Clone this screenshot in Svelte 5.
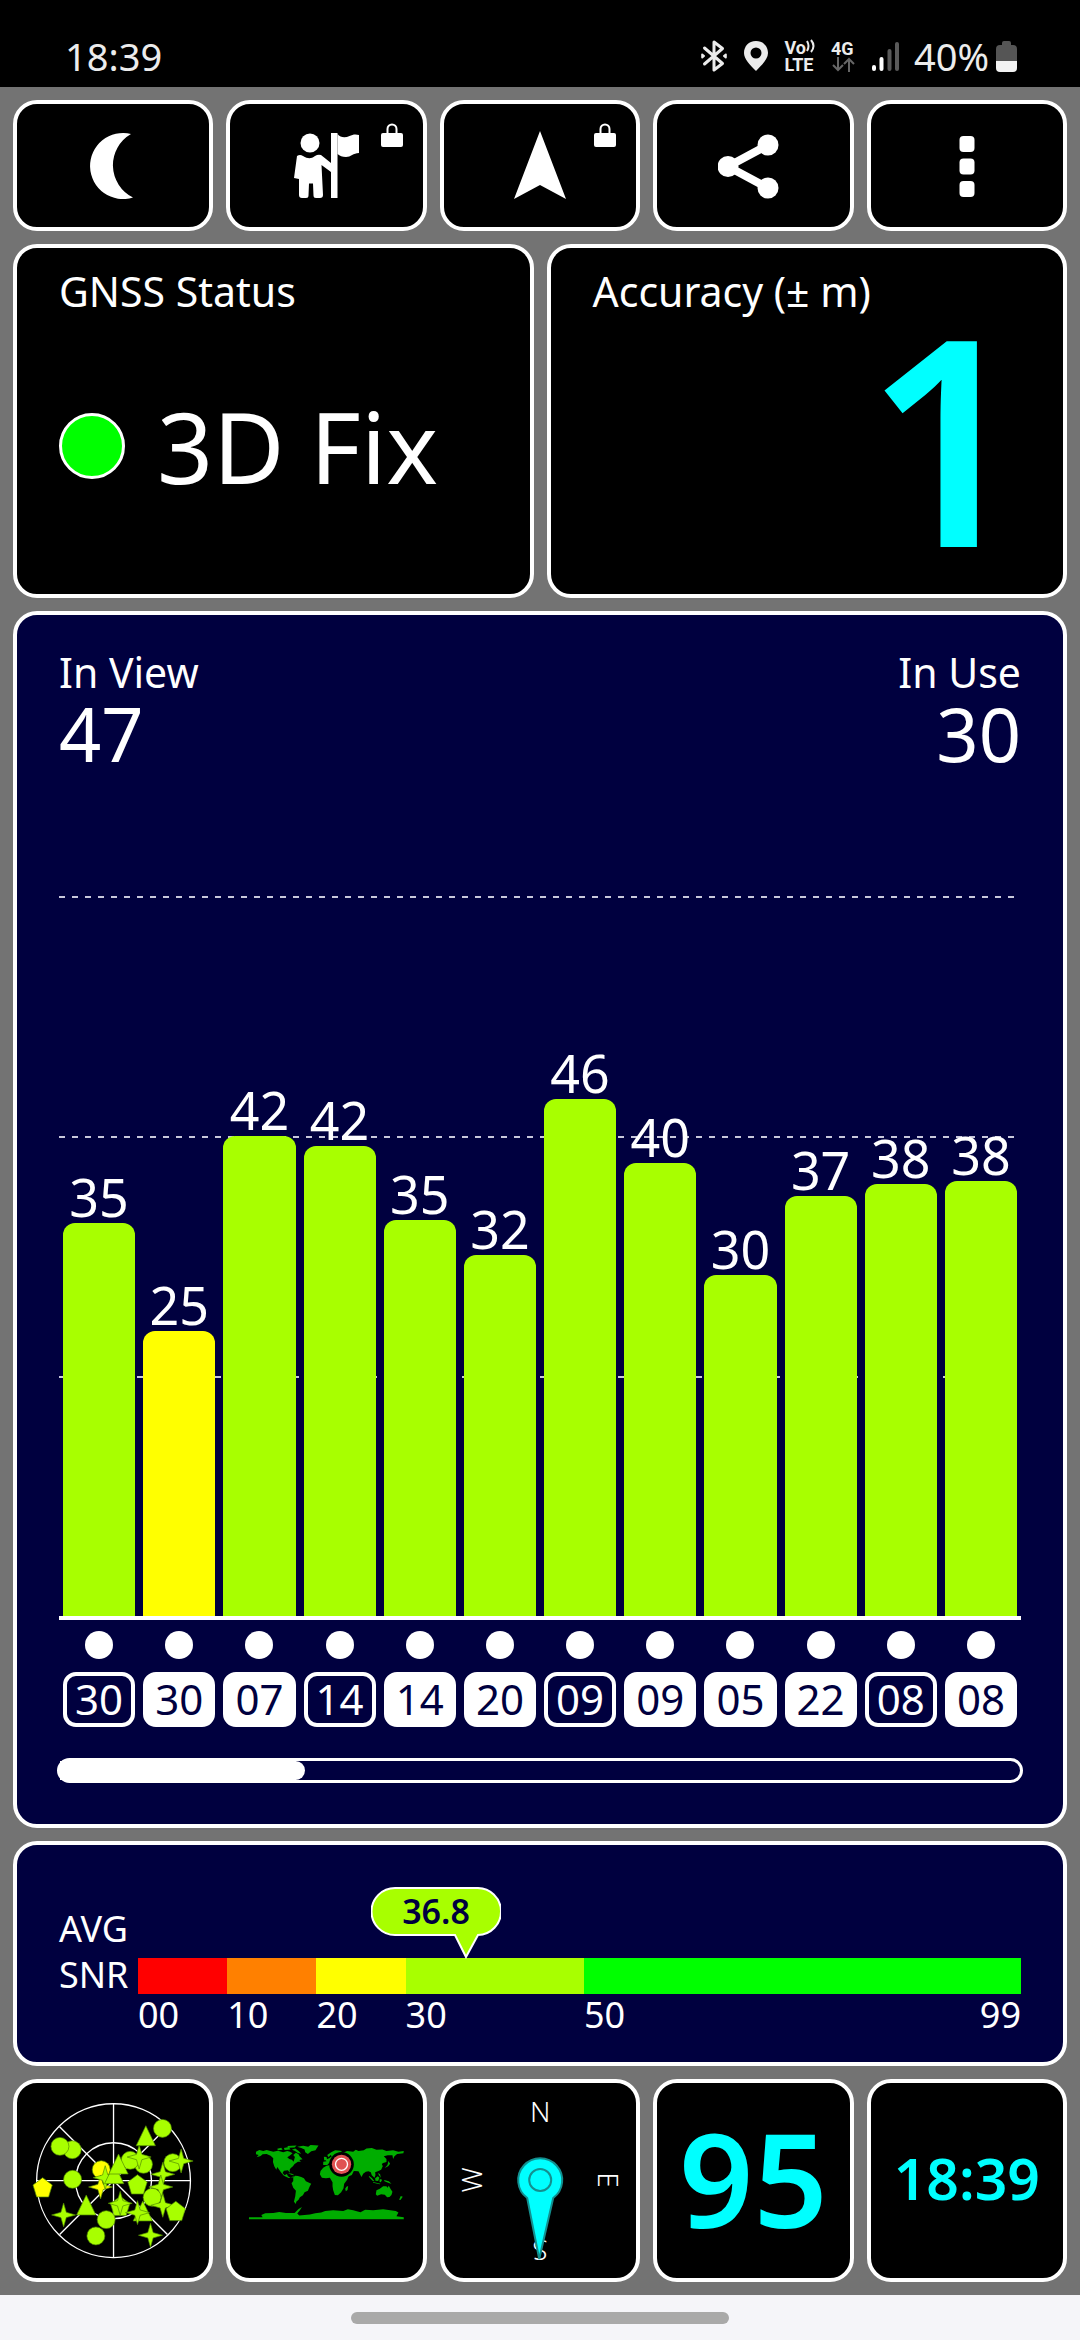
<script lang="ts">
    type Satellite = { id: string; snr: number; level: number; outlined?: boolean; weak?: boolean };

    // level is the bar height in percent of the plot
    const satellites: Satellite[] = [
        { id: "30", snr: 35, level: 54.6, outlined: true },
        { id: "30", snr: 25, level: 39.6, weak: true },
        { id: "07", snr: 42, level: 66.7 },
        { id: "14", snr: 42, level: 65.3, outlined: true },
        { id: "14", snr: 35, level: 55 },
        { id: "20", snr: 32, level: 50.1 },
        { id: "09", snr: 46, level: 71.8, outlined: true },
        { id: "09", snr: 40, level: 62.9 },
        { id: "05", snr: 30, level: 47.4 },
        { id: "22", snr: 37, level: 58.4 },
        { id: "08", snr: 38, level: 60, outlined: true },
        { id: "08", snr: 38, level: 60.4 },
    ];

    const segments = [
        { label: "00", size: 10, color: "#ff0000" },
        { label: "10", size: 10, color: "#ff8000" },
        { label: "20", size: 10, color: "#ffff00" },
        { label: "30", size: 20, color: "#a8ff00" },
        { label: "50", size: 49, color: "#00ff00" },
    ];

    let time = $state("18:39");
    let inView = $state(47);
    let average = $state(36.8);
    let scrolled = $state(25.5);

    const shapes: Record<string, string> = {
        circle: "M-27 0a27 27 0 1 0 54 0a27 27 0 1 0-54 0z",
        triangle: "M0-34L29 26H-29z",
        pentagon: "M0-30L29-8L18 28H-18L-29-8z",
        star: "M0-36L8-8L36 0L8 8L0 36L-8 8L-36 0L-8-8z",
    };

    const sky: [string, number, number, string?][] = [
        ["circle", 216, 268],
        ["circle", 179, 258],
        ["circle", 217, 357],
        ["circle", 303, 328, "#ffff00"],
        ["circle", 487, 204],
        ["triangle", 437, 230],
        ["pentagon", 127, 382, "#ffff00"],
        ["star", 301, 380, "#ffff00"],
        ["circle", 430, 312],
        ["circle", 390, 300],
        ["star", 417, 290],
        ["star", 315, 352],
        ["triangle", 342, 344],
        ["triangle", 355, 315],
        ["circle", 518, 307],
        ["star", 543, 302],
        ["star", 488, 342],
        ["star", 482, 380],
        ["circle", 456, 411],
        ["pentagon", 412, 373],
        ["star", 488, 435],
        ["pentagon", 527, 453],
        ["triangle", 258, 438],
        ["pentagon", 360, 438],
        ["star", 360, 429],
        ["triangle", 428, 456],
        ["star", 412, 457],
        ["star", 190, 464],
        ["circle", 318, 478],
        ["circle", 287, 527],
        ["star", 451, 525],
    ];
</script>

{#snippet lock()}
    <svg class="lock" viewBox="0 0 22 24">
        <path d="M6.500 11V6a4.500 4.500 0 0 1 9 0V11" fill="none" stroke="#fff" stroke-width="2" />
        <rect y="10" width="22" height="14" rx="2" fill="#fff" />
    </svg>
{/snippet}

<div class="app">
    <header class="status-bar">
        <span class="clock">{time}</span>
        <div class="status-icons">
            <svg width="28" height="34" viewBox="0 0 28 34" fill="none" stroke="#ececec" stroke-width="3" stroke-linejoin="round" stroke-linecap="round">
                <path d="M4.500 9L22.500 24.500L14 31V3L22.500 9.500L4.500 25" />
                <path d="M2.200 15.500v3L4 17zM25.800 15.500v3L24 17z" stroke-width="2" />
            </svg>
            <svg width="26" height="30" viewBox="0 0 26 30">
                <path fill="#ececec" fill-rule="evenodd" d="M13 0C5.500 0 1 5.500 1 12c0 6 6 12 12 18 6-6 12-12 12-18C25 5.500 20.500 0 13 0zm0 6.500a5.500 5.500 0 1 1 0 11 5.500 5.500 0 0 1 0-11z" />
            </svg>
            <div class="net">
                <span class="vo">Vo<svg width="10" height="14" viewBox="0 0 10 14" fill="none" stroke="#ececec" stroke-width="2"><path d="M1 2q3 5 0 10M5 1q5 6 0 12" /></svg></span>
                <span>LTE</span>
            </div>
            <div class="net">
                <span>4G</span>
                <svg width="25" height="15" viewBox="0 0 25 15" fill="none" stroke="#666" stroke-width="2"><path d="M7 0v13M2 8l5 5 5-5M18 15V2M13 7l5-5 5 5" /></svg>
            </div>
            <svg width="28" height="30" viewBox="0 0 28 30" stroke-width="4" stroke-linecap="round">
                <path d="M3 26v2M10.500 18v10" stroke="#fff" />
                <path d="M18.500 10v18M26 3v25" stroke="#5a5a5a" />
            </svg>
            <span class="charge">40%</span>
            <svg width="21" height="31" viewBox="0 0 21 31">
                <path d="M6 4V2q0-2 2-2h5q2 0 2 2v2h2q4 0 4 4v12H0V8q0-4 4-4z" fill="#555" />
                <path d="M0 20h21v7q0 4-4 4H4q-4 0-4-4z" fill="#f2f2f2" />
            </svg>
        </div>
    </header>

    <main>
        <nav class="row">
            <button class="tile tool" aria-label="Night mode">
                <svg class="icon" viewBox="0 0 70 70"><path d="M53 3A33 33 0 1 0 55 66.500A36 36 0 0 1 53 3z" /></svg>
            </button>
            <button class="tile tool" aria-label="Waypoints">
                <svg class="icon" viewBox="0 0 70 70">
                    <circle cx="18" cy="12" r="9.500" />
                    <rect x="39" y="2" width="6.500" height="65" />
                    <path d="M45.500 3c3 4 8 4 12 2 3-1.500 6-2 9.500-1v18c-6 0-8 4-13 4-4 0-6-1-8.500-3z" />
                    <path d="M5 25q3-2 6 0c5 3 8 3 12 0q3-2 6-1l10 8v9l-9.500-7L31 64q0 3-3 3h-4q-2.500 0-2.500-2.500L21 52.500h-4l-.5 12q0 2.500-2.500 2.500h-4q-3 0-3-3V48l-5-1z" />
                </svg>
                {@render lock()}
            </button>
            <button class="tile tool" aria-label="Navigate">
                <svg class="icon" viewBox="0 0 70 70"><path d="M35 0L61 68L35 54L9 68z" /></svg>
                {@render lock()}
            </button>
            <button class="tile tool" aria-label="Share">
                <svg class="icon" viewBox="0 0 70 70">
                    <path d="M50 14L10 35.500L50 57" fill="none" stroke="#fff" stroke-width="8" />
                    <circle cx="50" cy="14" r="10.500" />
                    <circle cx="10" cy="35.500" r="10.500" />
                    <circle cx="50" cy="57" r="10.500" />
                </svg>
            </button>
            <button class="tile tool" aria-label="Menu">
                <svg class="icon" viewBox="0 0 70 70">
                    <rect x="27.500" y="5" width="15" height="16" rx="4" />
                    <rect x="27.500" y="27.500" width="15" height="16" rx="4" />
                    <rect x="27.500" y="50" width="15" height="16" rx="4" />
                </svg>
            </button>
        </nav>

        <div class="row">
            <section class="tile info">
                <h2>GNSS Status</h2>
                <div class="fix"><span class="led"></span>3D Fix</div>
            </section>
            <section class="tile info">
                <h2>Accuracy (± m)</h2>
                <div class="accuracy">1</div>
            </section>
        </div>

        <section class="tile chart">
            <div class="counts">
                <div>
                    <h2>In View</h2>
                    <div class="count">{inView}</div>
                </div>
                <div class="right">
                    <h2>In Use</h2>
                    <div class="count">30</div>
                </div>
            </div>

            <div class="plot">
                <div class="grid-lines"><i></i><i></i><i></i></div>
                {#each satellites as sat}
                    <div class="column">
                        <span class="snr">{sat.snr}</span>
                        <div class="bar" class:weak={sat.weak} style="height: {sat.level}%"></div>
                    </div>
                {/each}
            </div>

            <div class="legend">
                {#each satellites as sat}
                    <div class="sat">
                        <span class="dot"></span>
                        <span class="badge" class:outlined={sat.outlined}>{sat.id}</span>
                    </div>
                {/each}
            </div>

            <div class="scroll"><div class="thumb" style="width: {scrolled}%"></div></div>
        </section>

        <section class="tile average">
            <div class="average-label">AVG<br />SNR</div>
            <div class="scale">
                <div class="pointer">
                    <svg class="bubble" viewBox="0 0 130 72" style="left: {(average / 99) * 100}%">
                        <path d="M24 1H106a23 23 0 0 1 1 47L95 70L84 48H24a23 23 0 0 1 0-47z" fill="#a8ff00" stroke="#fff" stroke-width="2" />
                        <text x="65" y="37" text-anchor="middle">{average}</text>
                    </svg>
                </div>
                <div class="segments">
                    {#each segments as seg}
                        <span style="flex-grow: {seg.size}; background: {seg.color}"></span>
                    {/each}
                </div>
                <div class="ticks">
                    {#each segments as seg, i}
                        <span style="flex-grow: {seg.size}">
                            {seg.label}
                            {#if i === segments.length - 1}<b>99</b>{/if}
                        </span>
                    {/each}
                </div>
            </div>
        </section>

        <nav class="row">
            <button class="tile page" aria-label="Sky view">
                <svg viewBox="50 68 578 585">
                    <g fill="none" stroke="#fff" stroke-width="4">
                        <circle cx="340" cy="361" r="231" />
                        <circle cx="340" cy="361" r="114" />
                        <path d="M340 130V592M109 361H571M178 199L502 523M502 199L178 523" />
                    </g>
                    {#each sky as [shape, x, y, color]}
                        <path d={shapes[shape]} transform="translate({x} {y})" fill={color ?? "#a8ff00"} stroke="#4f8a00" stroke-width="2" />
                    {/each}
                </svg>
            </button>
            <button class="tile page" aria-label="World map">
                <svg viewBox="690 68 578 585">
                    <g fill="#00ad00">
                        <path d="M768 274L778 269L790 272L800 269L820 274L834 271L850 276L862 272L870 274L878 279L868 287L862 291L868 296L876 298L881 304L885 290L880 284L888 277L896 282L899 288L908 297L898 299L903 304L894 304L884 311L879 318L872 324L869 329L870 337L864 330L852 331L848 338L854 345L861 341L864 348L872 352L882 347L880 351L866 353L852 346L844 337L832 320L829 328L823 318L819 305L820 294L812 286L800 281L788 282L782 287L770 291L776 284L768 282z" />
                        <path d="M892 259L910 256L925 259L932 254L956 255L951 263L947 270L934 273L924 281L916 276L914 267L904 263zM832 265l12-3 4 6-14 2zM852 263l14-3 6 7-18 2zM862 257l28-2-6 6-18 1zM876 268l10-4 10 8 8 8-10-2-10-7z" />
                        <path d="M864 338l12 2 8 5-10-2zM880 351L886 346L894 347L904 350L912 354L918 363L934 370L929 379L924 391L914 396L909 405L900 411L896 418L889 424L888 431L882 424L886 408L888 391L880 382L875 369L880 362z" />
                        <path d="M970 322L980 316L992 314L1002 320L1016 320L1026 324L1034 340L1047 346L1042 358L1033 370L1031 384L1024 396L1014 405L1005 404L1000 390L998 378L998 366L990 352L978 354L966 352L960 342L962 332zM1040 379l5-2-2 12-5 4-2-8z" />
                        <path d="M970 314L970 304L980 303L976 298L988 294L996 288L992 284L986 291L982 284L994 276L1006 270L1022 271L1030 277L1042 272L1060 274L1068 268L1076 272L1092 270L1100 264L1116 263L1130 268L1148 267L1160 272L1180 270L1196 274L1212 272L1211 279L1192 281L1184 288L1180 296L1178 285L1164 285L1152 288L1160 296L1160 305L1150 308L1146 311L1149 318L1144 328L1136 332L1126 336L1127 344L1124 352L1116 345L1113 336L1106 333L1098 334L1090 340L1085 350L1076 333L1062 332L1056 344L1042 350L1034 336L1028 320L1014 315L1005 307L990 306L982 314zM972 289l8 1 2 9-9 1z" />
                        <path d="M1108 347l8 6 8 10-5-1-12-13zM1126 354l8-6 5 4-4 10-8-1zM1120 365l22 5-2 2-20-5zM1140 356l7 2-4 8-4-2zM1153 359l14 4 8 7-6-1-15-6zM1135 338l6 4 2 10-6-8zM1166 302l5 8-6 8-10 5 8-9zM1130 390L1140 385L1150 378L1160 378L1163 382L1167 376L1172 385L1178 394L1175 404L1169 410L1162 411L1155 403L1144 402L1132 406L1128 402zM1203 407l6 2-7 10-4-1z" />
                        <path d="M747 471H788L784 464L796 459L820 458L838 455L858 458L884 458L896 446L906 440L900 450L892 460L898 466L930 463L946 459L964 457L976 452L1000 450L1030 452L1044 447L1060 450L1082 456L1096 448L1120 450L1150 447L1188 452L1196 457L1190 468L1212 471V477H747z" />
                    </g>
                    <circle cx="1025" cy="312" r="37" fill="#000" />
                    <circle cx="1025" cy="312" r="29" fill="#e05252" />
                    <circle cx="1025" cy="312" r="18" fill="none" stroke="#fff" stroke-width="4" />
                </svg>
            </button>
            <button class="tile page" aria-label="Compass">
                <svg viewBox="1 1 192 195">
                    <g class="cardinals" text-anchor="middle">
                        <text x="97" y="40">N</text>
                        <text transform="translate(39 98) rotate(-90)">W</text>
                        <text transform="translate(155 98) rotate(90)">E</text>
                        <text transform="translate(97 158) rotate(180)">S</text>
                    </g>
                    <path d="M84 116A22 22 0 1 1 110 116L96 177z" fill="#00ffff" stroke="#138f8f" stroke-width="2" />
                    <circle cx="97" cy="98" r="11" fill="none" stroke="#138f8f" stroke-width="2" />
                </svg>
            </button>
            <button class="tile page speed">95</button>
            <button class="tile page time">{time}</button>
        </nav>
    </main>

    <footer><span></span></footer>
</div>

<style>
    :global(body) {
        margin: 0;
        background: #737373;
    }

    .app {
        display: flex;
        flex-direction: column;
        min-height: 100vh;
        font-family: "Noto Sans", "Open Sans", sans-serif;
        color: #fff;
    }

    .app, .app * {
        box-sizing: border-box;
    }

    svg {
        display: block;
    }

    .status-bar {
        display: flex;
        justify-content: space-between;
        align-items: center;
        padding: 29px 63px 4px 65px;
        background: #000;
        color: #ececec;
        font-size: 38px;
        line-height: 54px;
    }

    .status-icons {
        display: flex;
        align-items: center;
        gap: 15px;
    }

    .net {
        display: flex;
        flex-direction: column;
        font: bold 18px/17px Roboto, sans-serif;
    }

    .vo {
        display: flex;
    }

    .charge {
        margin-right: -8px;
    }

    main {
        flex: 1;
        display: flex;
        flex-direction: column;
        gap: 13px;
        padding: 13px;
        background: #737373;
    }

    .row {
        display: flex;
        gap: 13px;
    }

    .row > * {
        flex: 1 1 0;
        min-width: 0;
    }

    .tile {
        border: 4px solid #fff;
        border-radius: 24px;
        background: #000;
        color: #fff;
        font-family: inherit;
    }

    button.tile {
        position: relative;
        display: flex;
        align-items: center;
        justify-content: center;
        padding: 0;
        cursor: pointer;
    }

    .tool {
        min-height: 131px;
    }

    .icon {
        width: 70px;
        height: 70px;
        fill: #fff;
    }

    .lock {
        position: absolute;
        top: 19px;
        right: 20px;
        width: 22px;
        height: 24px;
    }

    h2 {
        margin: 0;
        font-size: 41px;
        font-weight: 400;
        line-height: 56px;
    }

    .info {
        padding: 15px 34px 56px 42px;
    }

    .fix {
        display: flex;
        align-items: center;
        gap: 32px;
        margin-top: 77px;
        font-size: 98px;
        line-height: 100px;
    }

    .led {
        width: 66px;
        height: 66px;
        border: 3px solid #fff;
        border-radius: 50%;
        background: #00ff00;
    }

    .accuracy {
        margin-top: 13px;
        color: #00ffff;
        font-size: 288px;
        font-weight: 600;
        line-height: 206px;
        text-align: right;
    }

    .chart {
        flex: 1;
        display: flex;
        flex-direction: column;
        padding: 29px 42px 41px;
        background: #00003f;
    }

    .counts {
        display: flex;
        justify-content: space-between;
        margin-bottom: 128px;
    }

    .count {
        font-size: 74px;
        line-height: 68px;
    }

    .right {
        text-align: right;
    }

    .plot {
        position: relative;
        flex: 1;
        display: flex;
        min-height: 400px;
        border-bottom: 4px solid #fff;
    }

    .grid-lines {
        position: absolute;
        inset: 0;
        display: flex;
        flex-direction: column;
    }

    .grid-lines i {
        flex: 1;
        background: repeating-linear-gradient(90deg, #c8c8dc 0 6px, transparent 6px 13px) top / 100% 2px no-repeat;
    }

    .column {
        position: relative;
        flex: 1;
        display: flex;
        flex-direction: column;
        justify-content: flex-end;
        padding: 0 4px;
    }

    .snr {
        font-size: 52px;
        line-height: 52px;
        text-align: center;
    }

    .bar {
        flex-shrink: 0;
        border-radius: 12px 12px 0 0;
        background: #a8ff00;
    }

    .weak {
        background: #ffff00;
    }

    .legend {
        display: flex;
        margin: 11px 0 31px;
    }

    .sat {
        flex: 1;
        display: flex;
        flex-direction: column;
        align-items: center;
        gap: 13px;
        padding: 0 4px;
    }

    .dot {
        width: 28px;
        height: 28px;
        border-radius: 50%;
        background: #fff;
    }

    .badge {
        width: 100%;
        padding-bottom: 2px;
        border: 4px solid #fff;
        border-radius: 13px;
        background: #fff;
        color: #00003f;
        font-size: 42px;
        line-height: 45px;
        text-align: center;
    }

    .outlined {
        background: transparent;
        color: #fff;
    }

    .scroll {
        height: 25px;
        margin: 0 -2px;
        border: 3px solid #fff;
        border-radius: 13px;
    }

    .thumb {
        height: 100%;
        border-radius: 0 10px 10px 0;
        background: #fff;
    }

    .average {
        display: flex;
        padding: 42px 42px 26px;
        background: #00003f;
    }

    .average-label {
        width: 79px;
        margin-top: 19px;
        font-size: 36px;
        line-height: 46px;
    }

    .scale {
        flex: 1;
    }

    .pointer {
        position: relative;
        height: 71px;
    }

    .bubble {
        position: absolute;
        top: 0;
        width: 130px;
        height: 72px;
        margin-left: -95px;
    }

    .bubble text {
        font-size: 34px;
        font-weight: 600;
        fill: #00003f;
    }

    .segments {
        display: flex;
        height: 36px;
    }

    .segments span,
    .ticks span {
        flex-basis: 0;
        min-width: 0;
    }

    .ticks {
        display: flex;
        font-size: 36px;
        line-height: 42px;
    }

    .ticks span {
        display: flex;
        justify-content: space-between;
    }

    .ticks b {
        font-weight: 400;
    }

    .page {
        min-height: 203px;
    }

    .page svg {
        width: 100%;
        height: 195px;
    }

    .cardinals {
        fill: #fff;
        font-size: 28px;
        font-weight: 300;
    }

    button.speed,
    button.time {
        padding-bottom: 6px;
        color: #00ffff;
        font-weight: 600;
    }

    .speed {
        font-size: 130px;
        line-height: 130px;
    }

    .time {
        font-size: 57px;
    }

    footer {
        display: flex;
        justify-content: center;
        align-items: center;
        height: 45px;
        background: #f5f5f9;
    }

    footer span {
        width: 35%;
        height: 12px;
        border-radius: 6px;
        background: #a9a9a9;
    }
</style>
